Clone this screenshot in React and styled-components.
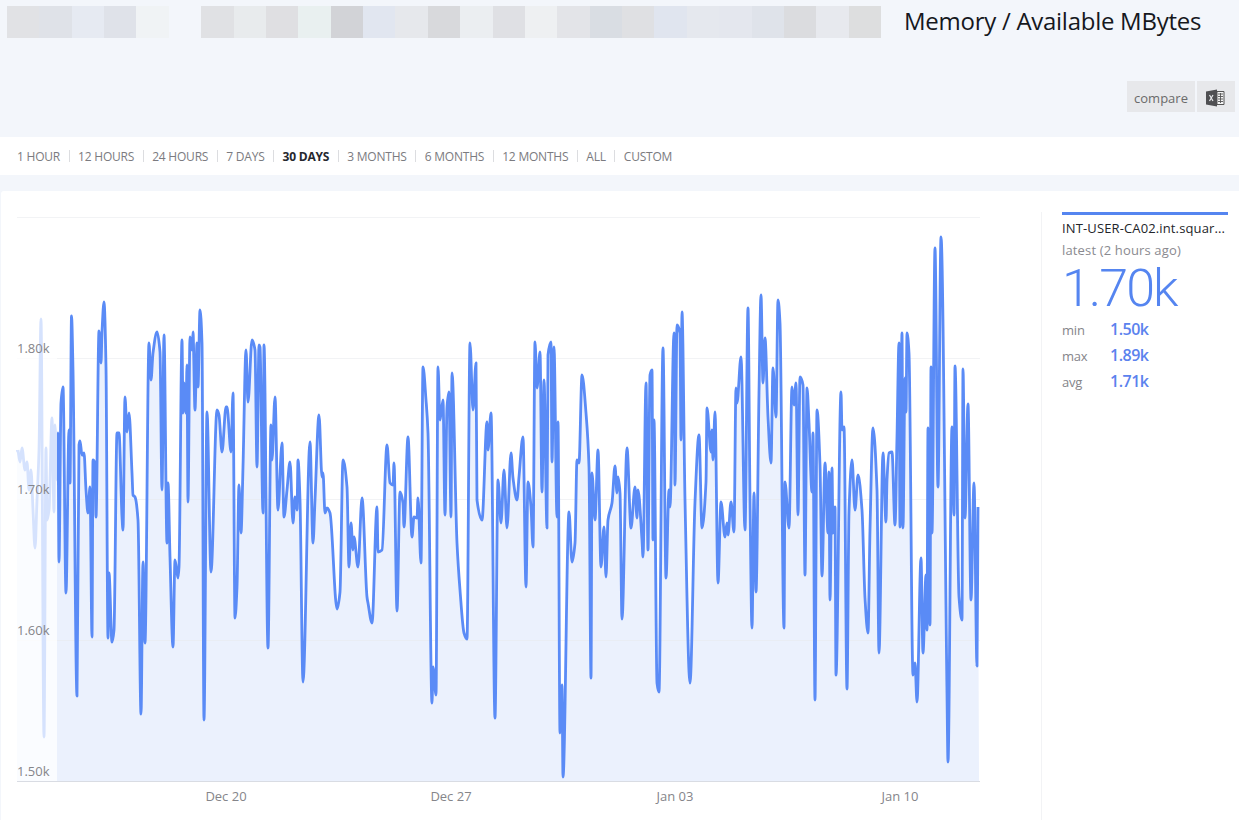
import React from "react";
import styled, { createGlobalStyle } from "styled-components";

const GlobalStyle = createGlobalStyle`
  html, body { margin: 0; padding: 0; background: #f3f6fb; }
  body { font-family: "Open Sans", "Noto Sans", sans-serif; width: 1239px; height: 820px; overflow: hidden; }
`;

const Page = styled.div`
  width: 1239px;
  height: 820px;
  display: flex;
  flex-direction: column;
  overflow: hidden;
`;
const Header = styled.header`
  height: 136px;
  box-sizing: border-box;
  padding: 6px 4px 0 7px;
  display: grid;
  grid-template-columns: 874px 1fr;
  grid-template-rows: 75px 31px;
  row-gap: 0;
`;
const Mosaic = styled.div`
  display: grid;
  grid-template-columns: repeat(27, 1fr);
  height: 32px;
`;
const Tile = styled.span`
  background: ${(p) => p.$c};
`;
const Title = styled.h1`
  margin: 0;
  padding-left: 23px;
  font-size: 24px;
  line-height: 30px;
  font-weight: 400;
  color: #16181d;
  white-space: nowrap;
  letter-spacing: -0.27px;
`;
const Actions = styled.div`
  grid-column: 1 / 3;
  display: flex;
  justify-content: flex-end;
  gap: 2px;
`;
const ActionButton = styled.button`
  width: ${(p) => p.$w}px;
  height: 31px;
  padding: 2px ${(p) => p.$pr || 0}px 0 0;
  border: 0;
  background: #e7e8eb;
  color: #6a6a6a;
  font-family: inherit;
  font-size: 13px;
  display: flex;
  align-items: center;
  justify-content: center;
`;
const RangeBar = styled.nav`
  height: 38px;
  margin-top: 1px;
  background: #fff;
  box-sizing: border-box;
  padding: 0 0 0 17px;
  display: flex;
  align-items: center;
`;
const RangeItem = styled.span`
  font-size: 12px;
  letter-spacing: -0.21px;
  color: ${(p) => (p.$active ? "#26282e" : "#7b7b80")};
  font-weight: ${(p) => (p.$active ? 700 : 400)};
  white-space: nowrap;
`;
const RangeSep = styled.i`
  width: 1px;
  height: 12px;
  margin: 0 8.5px;
  background: #dcdde0;
`;
const Card = styled.main`
  margin: 16px 0 0 1px;
  height: 629px;
  background: #fff;
  border-radius: 3px 0 0 0;
  display: flex;
`;
const ChartSvg = styled.svg`
  display: block;
  width: 1040px;
  height: 629px;
  flex: none;
`;
const AxisText = styled.text`
  font-family: "Open Sans", "Noto Sans", sans-serif;
  font-size: 13px;
  fill: #85858a;
`;
const Side = styled.aside`
  margin-top: 21px;
  flex: 1;
  border-left: 1px solid #f2f3f5;
  padding: 0 11px 0 20px;
  min-width: 0;
`;
const SeriesBar = styled.div`
  height: 3px;
  background: #5585f0;
`;
const SeriesName = styled.div`
  margin-top: 4px;
  font-size: 13px;
  line-height: 18px;
  letter-spacing: 0.13px;
  color: #23252a;
  white-space: nowrap;
`;
const Latest = styled.div`
  margin-top: 4px;
  font-size: 13px;
  line-height: 18px;
  letter-spacing: 0.15px;
  color: #8a8a8f;
`;
const BigValue = styled.div`
  font-family: Roboto, "Open Sans", sans-serif;
  font-size: 52px;
  line-height: 54px;
  margin-top: 3px;
  letter-spacing: -2px;
  color: #5585f0;
  font-weight: 300;
`;
const StatRow = styled.div`
  display: grid;
  grid-template-columns: 48px 1fr;
  align-items: baseline;
  height: 26px;
  line-height: 26px;
`;
const StatLabel = styled.span`
  font-size: 13px;
  color: #85858a;
  letter-spacing: -0.2px;
`;
const StatValue = styled.span`
  font-size: 16px;
  font-weight: 600;
  color: #5b82ee;
  letter-spacing: -0.5px;
`;

const colors = "e1e2e5 dfe2e8 e6eaf2 dfe2e9 f0f3f5 f3f6fb e0e1e4 e8ebed dfdfe2 e9f0f0 d2d3d7 e1e6f0 e6e8ec d8d9dc ebeef1 dfe0e4 eef0f2 e3e4e8 d9dde3 dfe0e3 e0e5ef e5e8ee e4e7ee dfe3ea dbdcdf e7e9ee dddedf".split(" ");
const ranges = ["1 HOUR", "12 HOURS", "24 HOURS", "7 DAYS", "30 DAYS", "3 MONTHS", "6 MONTHS", "12 MONTHS", "ALL", "CUSTOM"];

const raw = `18,450 20,462 22,448 25,470 27,462 29,490 31,470 33,510 35,548 37,500 39,450 41,319 44,737 46,448 47,520 49,510 52,418 54,512 55,425 57,480
58,433 59,562 61,403 63,387 66,593 69,430 70,483 71.5,316 73,370 77,696 79,445 80,441 82,455 84,453 86,490 88,513 90,487 92,637 93,460 95,463 96,517 99,331 101,363 102,332 104,302 106,367 108,638 109,573 112,642 114,630 117,433 119,433 122,517 123,530 125,397 127,432 129,413 132,473 133,495 135,497 138,520 141,714 143,562 145,643 149,343 151,380 153,353 157,332 160,352 162,490 164,335 167,543 168,483 170,557 173,647 175,560 178,578 179,567 182,340 183,413 184,383 186,413 187,365 188,502 190,337 192,350 193,332 195,410 197,343 198,387 200,310 202,343 204,720 207,412 211,572 217,410 219,415 222,452 226,407 227,407 231,452 233,393 235,618 237,587 239,485 241,533 243,467 246,350 248,402 252,340 255,350 257,467 259,345
260,347 263,513 264,345 268,648 271,425 272,460 275,397 278,510 282,443 284,517 287,490 290,462 293,523 295,497 297,510 298,460 300,500 303,682 310,442 313,543 315,500 319,415 322,477 323,473 325,513 327,508 330,513 337,609 340,592 343,460 347,487 349,567 351,523 353,550 354,537 358,567 362,498 367,597 368,603 372,623 377,507 378,552 382,550 387,445 390,483 393,485 394,463 397,611 400,492 403,503 404,527 408,437 412,537 414,517 417,518 418,498 421,563 423,367 426,400 428,433 432,703 433,667 436,695 438,367 440,420 443,400 445,515 447,407 449,392 451,517 452,373 457,543 460,590 464,633 467,639 470,343 473,410 476,363 477,500 482,520 487,422 488,450 491,413 495,718 498,480 501,523 504,470 507,528 511,453 513,478 517,500 519,477
523,437 526,587 528,482 531,507 533,547 535,342 537,388 540,352 542,492 544,380 547,528 548,355 551,342 552,462 554,347 557,517 558,422 560,733 562,685 563,777 569,512 572,562 575,543 577,460 579,463 582,375 586,413 589,467 591,678 592,473 595,520 598,450 601,567 604,527 606,577 608,520 612,503 615,466 617,493 618,477 620,493 622,619 627,448 631,528 635,487 637,518 638,490 642,540 643,557 646,383 648,550 650,375 652,370 653,540 654,420 657,683 659,692 663,348 666,578 669,490 670,507 674,333 675,485 677,325 680,333 681,440 682,312 685,500 690,683 695,502 699,435 702,528 706,482 707,408 711,452 712,430 713,460 715,412 718,583 721,502 725,537 727,523 728,535 731,502 734,532 736,388 737,403 741,357 745,530 748,308 750,500 752,628 754,493 756,592 759,393 761,295 763,383 765,338 768,417 771,463 773,368 776,417 778,300
780,323 784,628 785,482 789,528 792,387 794,405 796,383 798,515 800,377 803,385 805,575 807,388 809,423 812,492 813,433 815,700 817,410 820,465 822,576 825,463 828,533 829,472 830,600 832,468 833,533 835,507 836,675 841,392 842,430 844,427 847,689 849,512 852,460 855,510 858,475 862,510 865,598 868,633 870,530 873,428 877,490 879,653 883,453 886,522 887,480 889,453 892,452 895,525 897,437 899,343 900,527 902,333 903,528 905,378 906,412 907,333 909,353 913,675 915,663 917,702 921,558 923,653 926,575 927,630 928,428 930,625 931,367 932,533 935,248 938,487 941,237 947,693 948,762 952,427 954,515 955,366 959,597 962,620 963,369 965,518 968,404 971,600 974,483 977,666 978,507`;

const OX = 1;
const OY = 191;
const pts = raw.trim().split(/\s+/).map((s) => {
  const [x, y] = s.split(",").map(Number);
  return [x - OX, y - OY];
});

// Monotone cubic through the points, so that peaks stay at their value.
const monotonePath = (p) => {
  const n = p.length;
  const slopes = [];
  for (let i = 0; i < n - 1; i++) slopes.push((p[i + 1][1] - p[i][1]) / (p[i + 1][0] - p[i][0]));
  const tan = p.map((_, i) => {
    if (i === 0) return slopes[0];
    if (i === n - 1) return slopes[n - 2];
    const a = slopes[i - 1];
    const b = slopes[i];
    return a * b <= 0 ? 0 : (2 * a * b) / (a + b);
  });
  let d = `M${p[0][0]} ${p[0][1]}`;
  for (let i = 0; i < n - 1; i++) {
    const h = (p[i + 1][0] - p[i][0]) / 3;
    d += `C${(p[i][0] + h).toFixed(2)} ${(p[i][1] + h * tan[i]).toFixed(2)} ${(p[i + 1][0] - h).toFixed(2)} ${(p[i + 1][1] - h * tan[i + 1]).toFixed(2)} ${p[i + 1][0]} ${p[i + 1][1]}`;
  }
  return d;
};
const linePath = monotonePath(pts);
const areaPath = `M16 590V${pts[0][1]}L${pts[0][0]} ${pts[0][1]}${linePath.slice(linePath.indexOf("C"))}L978 590Z`;
const grid = [217, 358, 499, 640];
const yLabels = [["1.80k", 353], ["1.70k", 494], ["1.60k", 635], ["1.50k", 776]];
const xLabels = [["Dec 20", 226], ["Dec 27", 451], ["Jan 03", 675], ["Jan 10", 900]];

const PriceChart = () => (
  <ChartSvg viewBox="0 0 1040 629">
    <path d={areaPath} fill="#ebf1fd" />
    {grid.map((y) => (
      <line key={y} x1={16} x2={979} y1={y - OY + 0.5} y2={y - OY + 0.5} stroke="#e8e9ec" strokeOpacity="0.55" />
    ))}
    <path d={linePath} fill="none" stroke="#5a8bf6" strokeWidth="2.8" strokeLinejoin="round" />
    <rect x={16} y={27} width={40} height={563} fill="#fff" opacity="0.75" />
    <line x1={16} x2={979} y1={590.5} y2={590.5} stroke="#d9dce3" />
    {yLabels.map(([t, y]) => (
      <AxisText key={t} x={16} y={y - OY}>{t}</AxisText>
    ))}
    {xLabels.map(([t, x]) => (
      <AxisText key={t} x={x - OX} y={801 - OY} textAnchor="middle">{t}</AxisText>
    ))}
  </ChartSvg>
);

const ExcelIcon = () => (
  <svg width="19" height="18" viewBox="0 0 19 18">
    <path d="M11 2.500h7v13h-7z" fill="#f4f4f5" stroke="#555" />
    <path d="M12 5h5M12 7.500h5M12 10h5M12 12.500h5M14.500 4v10" stroke="#555" strokeWidth="0.9" />
    <path d="M0 2.500 11 .5v17L0 15.500z" fill="#4f4f52" />
    <path d="M3.500 6 7 12M7 6l-3.500 6" stroke="#e7e8eb" strokeWidth="1.2" />
  </svg>
);

export default function App() {
  return (
    <Page>
      <GlobalStyle />
      <Header>
        <Mosaic>
          {colors.map((c, i) => (
            <Tile key={i} $c={"#" + c} />
          ))}
        </Mosaic>
        <Title>Memory / Available MBytes</Title>
        <Actions>
          <ActionButton $w={68}>compare</ActionButton>
          <ActionButton $w={38} $pr={2}><ExcelIcon /></ActionButton>
        </Actions>
      </Header>
      <RangeBar>
        {ranges.map((r, i) => (
          <React.Fragment key={r}>
            {i > 0 && <RangeSep />}
            <RangeItem $active={r === "30 DAYS"}>{r}</RangeItem>
          </React.Fragment>
        ))}
      </RangeBar>
      <Card>
        <PriceChart />
        <Side>
          <SeriesBar />
          <SeriesName>INT-USER-CA02.int.squar...</SeriesName>
          <Latest>latest (2 hours ago)</Latest>
          <BigValue>1.70k</BigValue>
          <StatRow><StatLabel>min</StatLabel><StatValue>1.50k</StatValue></StatRow>
          <StatRow><StatLabel>max</StatLabel><StatValue>1.89k</StatValue></StatRow>
          <StatRow><StatLabel>avg</StatLabel><StatValue>1.71k</StatValue></StatRow>
        </Side>
      </Card>
    </Page>
  );
}
